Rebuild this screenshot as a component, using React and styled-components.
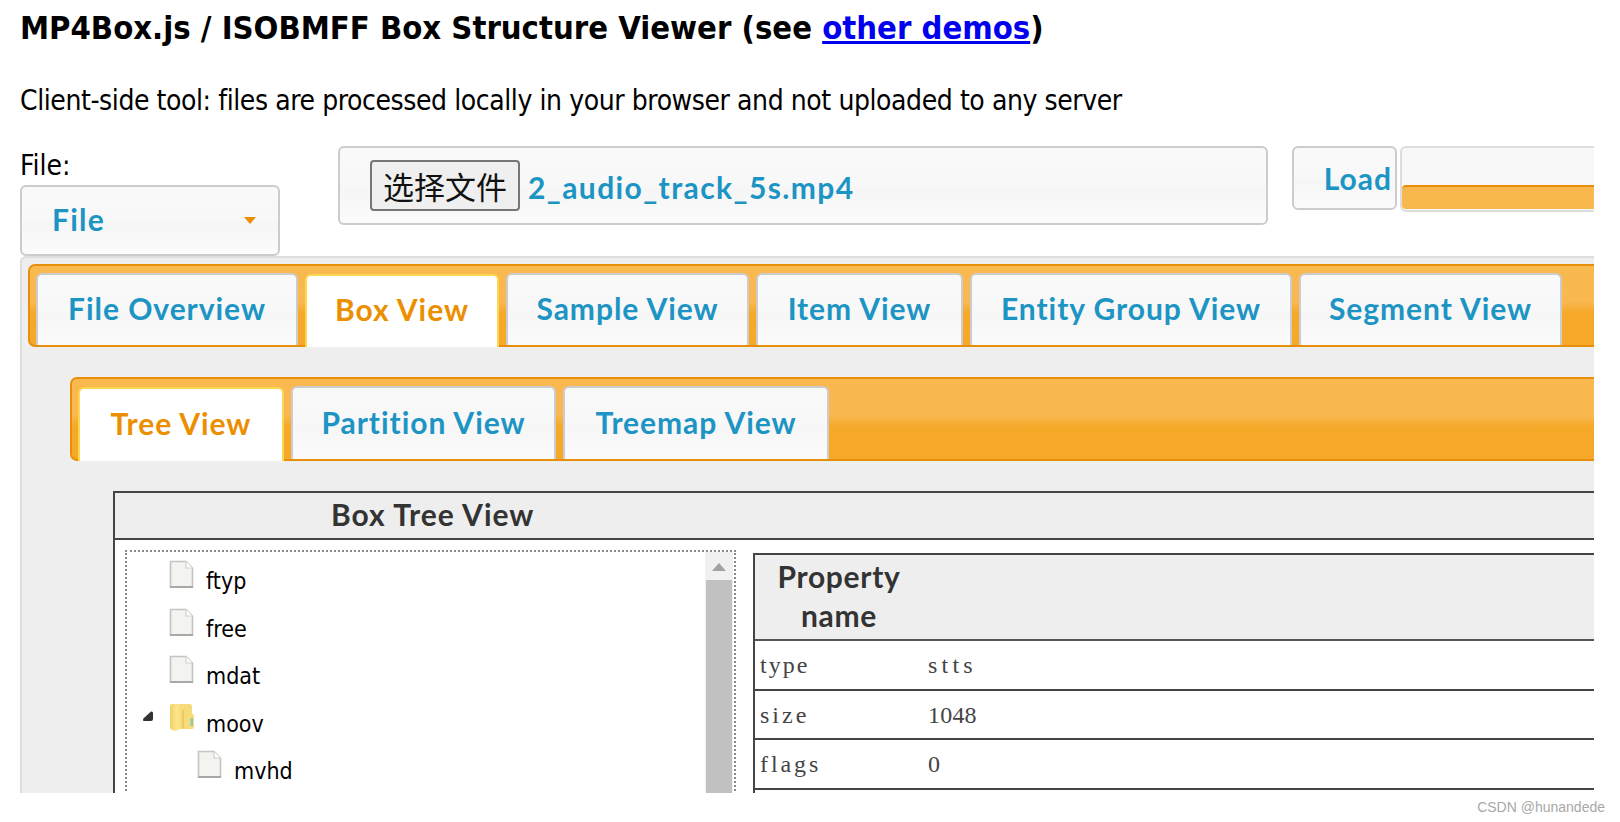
import React from 'react';
import styled, { createGlobalStyle } from 'styled-components';

const GlobalStyle = createGlobalStyle`
    html, body { margin: 0; padding: 0; background: #fff; }
`

const uiFont = `"DejaVu Sans Condensed", "Noto Sans", "Liberation Sans", sans-serif`
const tabFont = `Lato, "Noto Sans", sans-serif`

const Frame = styled.div`
    width: 1594px;
    height: 793px;
    overflow: hidden;
    box-sizing: border-box;
    padding-left: 20px;
    font-family: ${uiFont};
    color: #000;
`

const Title = styled.h3`
    margin: 0;
    padding-top: 8px;
    height: 40px;
    font-size: 32.5px;
    line-height: 40px;
    font-weight: 700;
    white-space: nowrap;
    a { color: #0000ee; }
`

const Intro = styled.p`
    margin: 33px 0 0;
    height: 40px;
    font-size: 28px;
    line-height: 40px;
    letter-spacing: -0.42px;
    white-space: nowrap;
`

const FormRow = styled.div`
    display: flex;
    align-items: flex-start;
    margin-top: 25px;
    height: 110px;
    width: 1700px;
`

const FileColumn = styled.div`
    width: 260px;
    padding-top: 5px;
`

const FileLabel = styled.div`
    height: 30px;
    margin-bottom: 4px;
    font-size: 28px;
    line-height: 30px;
`

const glass = `linear-gradient(180deg, #f9f9f9 0%, #f8f8f8 50%, #f6f6f6 55%, #fbfbfb 100%)`

const SelectButton = styled.div`
    box-sizing: border-box;
    height: 71px;
    display: flex;
    align-items: center;
    justify-content: space-between;
    padding: 0 22px 4px 30px;
    border: 2px solid #ccc;
    border-radius: 6px;
    background: ${glass};
    color: #1c94c4;
    font-family: ${tabFont};
    font-size: 30px;
    font-weight: 700;
    letter-spacing: 1.2px;
`

const Caret = styled.span`
    width: 0;
    height: 0;
    margin-top: 3px;
    border-left: 6px solid transparent;
    border-right: 6px solid transparent;
    border-top: 7px solid #ef8c08;
`

const FileBox = styled.div`
    box-sizing: border-box;
    width: 930px;
    height: 79px;
    margin-left: 58px;
    display: flex;
    align-items: center;
    gap: 8px;
    padding: 0 0 0 30px;
    border: 2px solid #ccc;
    border-radius: 6px;
    background: ${glass};
`

const ChooseButton = styled.div`
    box-sizing: border-box;
    width: 150px;
    height: 51px;
    display: flex;
    align-items: center;
    justify-content: center;
    border: 2px solid #767676;
    border-radius: 4px;
    background: #efefef;
    font-family: "Noto Sans CJK SC", sans-serif;
    font-size: 31px;
    color: #111;
`

const FileName = styled.span`
    margin-top: 2px;
    color: #1c94c4;
    font-family: ${tabFont};
    font-size: 30px;
    font-weight: 700;
    letter-spacing: 1.4px;
`

const LoadButton = styled.div`
    box-sizing: border-box;
    width: 105px;
    height: 64px;
    margin-left: 24px;
    padding-right: 3px;
    display: flex;
    align-items: center;
    justify-content: flex-end;
    border: 2px solid #ccc;
    border-radius: 6px;
    background: ${glass};
    color: #1c94c4;
    font-family: ${tabFont};
    font-size: 30px;
    font-weight: 700;
    letter-spacing: 1px;
`

const Progress = styled.div`
    box-sizing: border-box;
    width: 300px;
    height: 66px;
    margin-left: 3px;
    padding-top: 37px;
    border: 2px solid #ddd;
    border-radius: 6px;
    background: #f8f8f8;
`

const ProgressValue = styled.div`
    height: 24px;
    border-top: 2px solid #e78f08;
    border-radius: 4px;
    box-sizing: border-box;
    background: #f8b84e;
`

const TabsPanel = styled.div`
    box-sizing: border-box;
    width: 1700px;
    height: 600px;
    padding: 6px 0 0 6px;
    border: 2px solid #ddd;
    border-radius: 6px 0 0 0;
    background: #eee;
`

const TabBar = styled.div`
    box-sizing: border-box;
    height: ${({ $height }) => $height}px;
    display: flex;
    align-items: flex-end;
    gap: 7px;
    padding-left: 6px;
    border: 2px solid #e78f08;
    border-radius: 7px;
    background: linear-gradient(180deg, #fab94f 0%, #f9b850 45%, #f6a828 60%, #f6a828 100%);
`

const SubTabs = styled(TabBar)`
    margin: 30px 0 0 42px;
`

const Tab = styled.div`
    box-sizing: border-box;
    height: ${({ $active, $height }) => ($active ? $height + 1 : $height)}px;
    width: ${({ $width }) => $width}px;
    margin-bottom: ${({ $active }) => ($active ? '-2px' : '0')};
    display: flex;
    align-items: center;
    justify-content: center;
    padding-bottom: ${({ $lift }) => $lift}px;
    border: 2px solid ${({ $active }) => ($active ? '#fbd850' : '#ccc')};
    border-bottom: 0;
    border-radius: 6px 6px 0 0;
    background: ${({ $active }) => ($active ? '#fff' : glass)};
    color: ${({ $active }) => ($active ? '#eb8f00' : '#1c94c4')};
    font-family: ${tabFont};
    font-size: 30px;
    font-weight: 700;
    letter-spacing: 0.95px;
    white-space: nowrap;
`

const TreeTable = styled.div`
    box-sizing: border-box;
    width: 1600px;
    margin: 30px 0 0 85px;
    border: 2px solid #444;
    background: #fff;
    height: 400px;
`

const TreeHeading = styled.div`
    box-sizing: border-box;
    height: 47px;
    padding-left: 216px;
    border-bottom: 2px solid #444;
    background: #eee;
    color: #333;
    font-family: ${tabFont};
    font-size: 30px;
    font-weight: 700;
    letter-spacing: 1px;
    line-height: 42px;
`

const TreeBody = styled.div`
    display: flex;
    align-items: flex-start;
    padding: 10px 0 0 10px;
`

const TreeBox = styled.div`
    box-sizing: border-box;
    width: 611px;
    height: 340px;
    display: flex;
    justify-content: space-between;
    border: 2px dotted #888;
`

const TreeList = styled.ul`
    list-style: none;
    margin: 0;
    padding: 8px 0 0 0;
    font-size: 23px;
`

const TreeRow = styled.li`
    position: relative;
    display: flex;
    align-items: flex-start;
    height: 47.6px;
    padding-left: ${({ $depth }) => 42 + $depth * 28}px;
    color: #000;
`

const RowLabel = styled.span`
    margin: 5px 0 0 12px;
    line-height: 32px;
`

const Expander = styled.svg`
    position: absolute;
    left: 15px;
    top: 7px;
`

const ScrollBar = styled.div`
    width: 28px;
    margin-right: 1px;
    background: #f1f1f1;
    display: flex;
    flex-direction: column;
    align-items: center;
`

const ScrollArrow = styled.span`
    margin-top: 11px;
    width: 0;
    height: 0;
    border-left: 7px solid transparent;
    border-right: 7px solid transparent;
    border-bottom: 8px solid #a3a3a3;
`

const ScrollThumb = styled.div`
    width: 26px;
    flex: 1;
    margin-top: 9px;
    background: #c1c1c1;
`

const PropTable = styled.div`
    box-sizing: border-box;
    width: 900px;
    height: 300px;
    margin: 3px 0 0 17px;
    border: 2px solid #444;
    border-width: 2px 0 0 2px;
`

const PropHeading = styled.div`
    box-sizing: border-box;
    height: 86px;
    width: 100%;
    padding: 2px 0 0 0;
    border-bottom: 2px solid #555;
    background: #eee;
    color: #333;
    font-family: ${tabFont};
    font-size: 30px;
    font-weight: 700;
    line-height: 39px;
    letter-spacing: 0.7px;
`

const PropHeadingText = styled.div`
    width: 168px;
    text-align: center;
`

const PropRow = styled.div`
    box-sizing: border-box;
    height: 49.5px;
    display: flex;
    align-items: center;
    padding: 2px 0 0 5px;
    border-bottom: 2px solid #444;
    font-family: "Liberation Serif", serif;
    font-size: 24px;
    color: #444;
`

const PropName = styled.span`
    width: 168px;
    letter-spacing: ${({ $tracking }) => $tracking}px;
`

const PropValue = styled.span`
    letter-spacing: ${({ $tracking }) => $tracking}px;
`

const Footer = styled.div`
    height: 29px;
    padding-right: 15px;
    text-align: right;
    font-family: "Liberation Sans", sans-serif;
    font-size: 14px;
    line-height: 28px;
    color: #a8a8a8;
`

const mainTabs = [
    { label: 'File Overview', width: 262 },
    { label: 'Box View', width: 194, active: true },
    { label: 'Sample View', width: 243 },
    { label: 'Item View', width: 207 },
    { label: 'Entity Group View', width: 322 },
    { label: 'Segment View', width: 263 },
]

const subTabs = [
    { label: 'Tree View', width: 206, active: true },
    { label: 'Partition View', width: 265 },
    { label: 'Treemap View', width: 266 },
]

const boxes = [
    { name: 'ftyp', depth: 0 },
    { name: 'free', depth: 0 },
    { name: 'mdat', depth: 0 },
    { name: 'moov', depth: 0, folder: true },
    { name: 'mvhd', depth: 1 },
]

// the real page has these in a fixed width CJK font, tracking stands in for that
const props = [
    { name: 'type', nameTracking: 2, value: 'stts', valueTracking: 4.2 },
    { name: 'size', nameTracking: 3, value: '1048', valueTracking: 0.2 },
    { name: 'flags', nameTracking: 2.9, value: '0', valueTracking: 0 },
]

function FileIcon() {
    return <svg width="25" height="29" viewBox="0 0 25 29">
        <path d="M1.5 1.5 H17 L23.5 8 V27 H1.5 Z" fill="#f3f4f0" stroke="#c4c4c2" strokeWidth="1.6"/>
        <path d="M1 27 H24" stroke="#a8a8a6" strokeWidth="2"/>
        <path d="M17 1.5 V8 H23.5" fill="#fff" stroke="#d0d0ce" strokeWidth="1.2"/>
    </svg>
}

function FolderIcon() {
    return <svg width="25" height="29" viewBox="0 0 25 29">
        <defs>
            <linearGradient id="folderFront" x1="0" y1="0" x2="1" y2="0">
                <stop offset="0" stopColor="#f0d064"/>
                <stop offset="0.5" stopColor="#fbe58c"/>
                <stop offset="1" stopColor="#f6d970"/>
            </linearGradient>
        </defs>
        <path d="M10 1 H21 Q23 1 23 4 V11 Q25 11 25 13 V24 Q25 26 23 26 H10 Z" fill="#f6db78"/>
        <path d="M3 1 H9 Q14 3 14 8 V25 Q10 26 7 28 Q1 27 1 24 V3 Q1 1 3 1 Z" fill="url(#folderFront)"/>
        <path d="M14 7 V25.5" stroke="#e4c05a" strokeWidth="1.2"/>
        <rect x="21.5" y="15" width="2.5" height="8" fill="#8ccdb4"/>
    </svg>
}

function BoxRow({ box }) {
    return <TreeRow $depth={box.depth}>
        {box.folder && <Expander width="12" height="12" viewBox="0 0 12 12">
            <path d="M1 10 Q1 8 3 7 L9 1.5 Q11 1 11 3 V9 Q11 11 9 11 H2 Q1 11 1 10 Z" fill="#333"/>
        </Expander>}
        {box.folder ? <FolderIcon/> : <FileIcon/>}
        <RowLabel>{box.name}</RowLabel>
    </TreeRow>
}

export default function App() {
    return <>
        <GlobalStyle/>
        <Frame>
            <Title>MP4Box.js / ISOBMFF Box Structure Viewer (see <a href="#demos">other demos</a>)</Title>
            <Intro>Client-side tool: files are processed locally in your browser and not uploaded to any server</Intro>
            <FormRow>
                <FileColumn>
                    <FileLabel>File:</FileLabel>
                    <SelectButton>File<Caret/></SelectButton>
                </FileColumn>
                <FileBox>
                    <ChooseButton>选择文件</ChooseButton>
                    <FileName>2_audio_track_5s.mp4</FileName>
                </FileBox>
                <LoadButton>Load</LoadButton>
                <Progress><ProgressValue/></Progress>
            </FormRow>
            <TabsPanel>
                <TabBar $height={83}>
                    {mainTabs.map(t => <Tab key={t.label} $width={t.width} $height={72} $lift={5} $active={t.active}>{t.label}</Tab>)}
                </TabBar>
                <SubTabs $height={84}>
                    {subTabs.map(t => <Tab key={t.label} $width={t.width} $height={73} $lift={4} $active={t.active}>{t.label}</Tab>)}
                </SubTabs>
                <TreeTable>
                    <TreeHeading>Box Tree View</TreeHeading>
                    <TreeBody>
                        <TreeBox>
                            <TreeList>
                                {boxes.map(b => <BoxRow key={b.name} box={b}/>)}
                            </TreeList>
                            <ScrollBar>
                                <ScrollArrow/>
                                <ScrollThumb/>
                            </ScrollBar>
                        </TreeBox>
                        <PropTable>
                            <PropHeading><PropHeadingText>Property name</PropHeadingText></PropHeading>
                            {props.map(p => <PropRow key={p.name}>
                                <PropName $tracking={p.nameTracking}>{p.name}</PropName>
                                <PropValue $tracking={p.valueTracking}>{p.value}</PropValue>
                            </PropRow>)}
                        </PropTable>
                    </TreeBody>
                </TreeTable>
            </TabsPanel>
        </Frame>
        <Footer>CSDN @hunandede</Footer>
    </>
}
